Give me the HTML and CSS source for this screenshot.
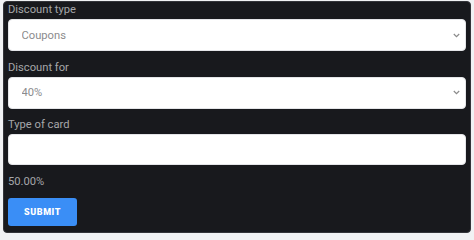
FILE: index.html
```html
<!DOCTYPE html>
<html lang="en">
<head>
<meta charset="utf-8">
<title>Discount form</title>
<link rel="stylesheet" href="styles.css">
</head>
<body>
<form class="panel">
  <div class="field">
    <label class="label" for="dtype">Discount type</label>
    <div class="select-wrap">
      <select id="dtype" class="control"><option>Coupons</option></select>
      <svg class="chevron" width="7" height="5" viewBox="0 0 7 5"><path d="M0.8 1 L3.5 3.6 L6.2 1" fill="none" stroke="#8a8a8a" stroke-width="1.2"/></svg>
    </div>
  </div>
  <div class="field">
    <label class="label" for="dfor">Discount for</label>
    <div class="select-wrap">
      <select id="dfor" class="control"><option>40%</option></select>
      <svg class="chevron" width="7" height="5" viewBox="0 0 7 5"><path d="M0.8 1 L3.5 3.6 L6.2 1" fill="none" stroke="#8a8a8a" stroke-width="1.2"/></svg>
    </div>
  </div>
  <div class="field">
    <label class="label" for="card">Type of card</label>
    <input id="card" class="control input" type="text">
  </div>
  <div class="result">50.00%</div>
  <button type="button" class="submit">SUBMIT</button>
</form>
</body>
</html>
```
FILE: styles.css
```css
html, body {
  margin: 0;
  padding: 0;
  background: #f1f2f4;
}
body {
  padding: 1px 3px 4px 3px;
  font-family: Roboto, "Liberation Sans", sans-serif;
}
.panel {
  margin: 0;
  width: 468px;
  box-sizing: border-box;
  background: #18191d;
  border: 1px solid #34353a;
  border-radius: 4px;
  padding: 0 4px 6px 4px;
  display: flex;
  flex-direction: column;
  align-items: flex-start;
}
.field {
  width: 100%;
  display: flex;
  flex-direction: column;
}
.field + .field {
  margin-top: 8.5px;
}
.label {
  font-size: 11.2px;
  line-height: 15px;
  color: #a6a7aa;
  margin-bottom: 2px;
}
.select-wrap {
  position: relative;
}
.control {
  appearance: none;
  -webkit-appearance: none;
  width: 100%;
  box-sizing: border-box;
  height: 32px;
  margin: 0;
  padding: 0 12.5px;
  background: #ffffff;
  border: 1px solid #e4e5e8;
  border-radius: 4px;
  font-family: Roboto, "Liberation Sans", sans-serif;
  font-size: 11.2px;
  color: #8b8b8d;
  outline: none;
}
.input {
  height: 31px;
}
.chevron {
  position: absolute;
  right: 6px;
  top: 13.5px;
}
.result {
  margin-top: 8.5px;
  font-size: 11.2px;
  line-height: 15px;
  color: #a6a7aa;
}
.submit {
  margin-top: 9.5px;
  width: 69px;
  height: 28px;
  border: none;
  border-radius: 3px;
  background: #3a8ef6;
  color: #ffffff;
  font-family: Roboto, "Liberation Sans", sans-serif;
  font-weight: 900;
  font-size: 9px;
  letter-spacing: 0.6px;
  padding: 0;
  cursor: pointer;
}
```
